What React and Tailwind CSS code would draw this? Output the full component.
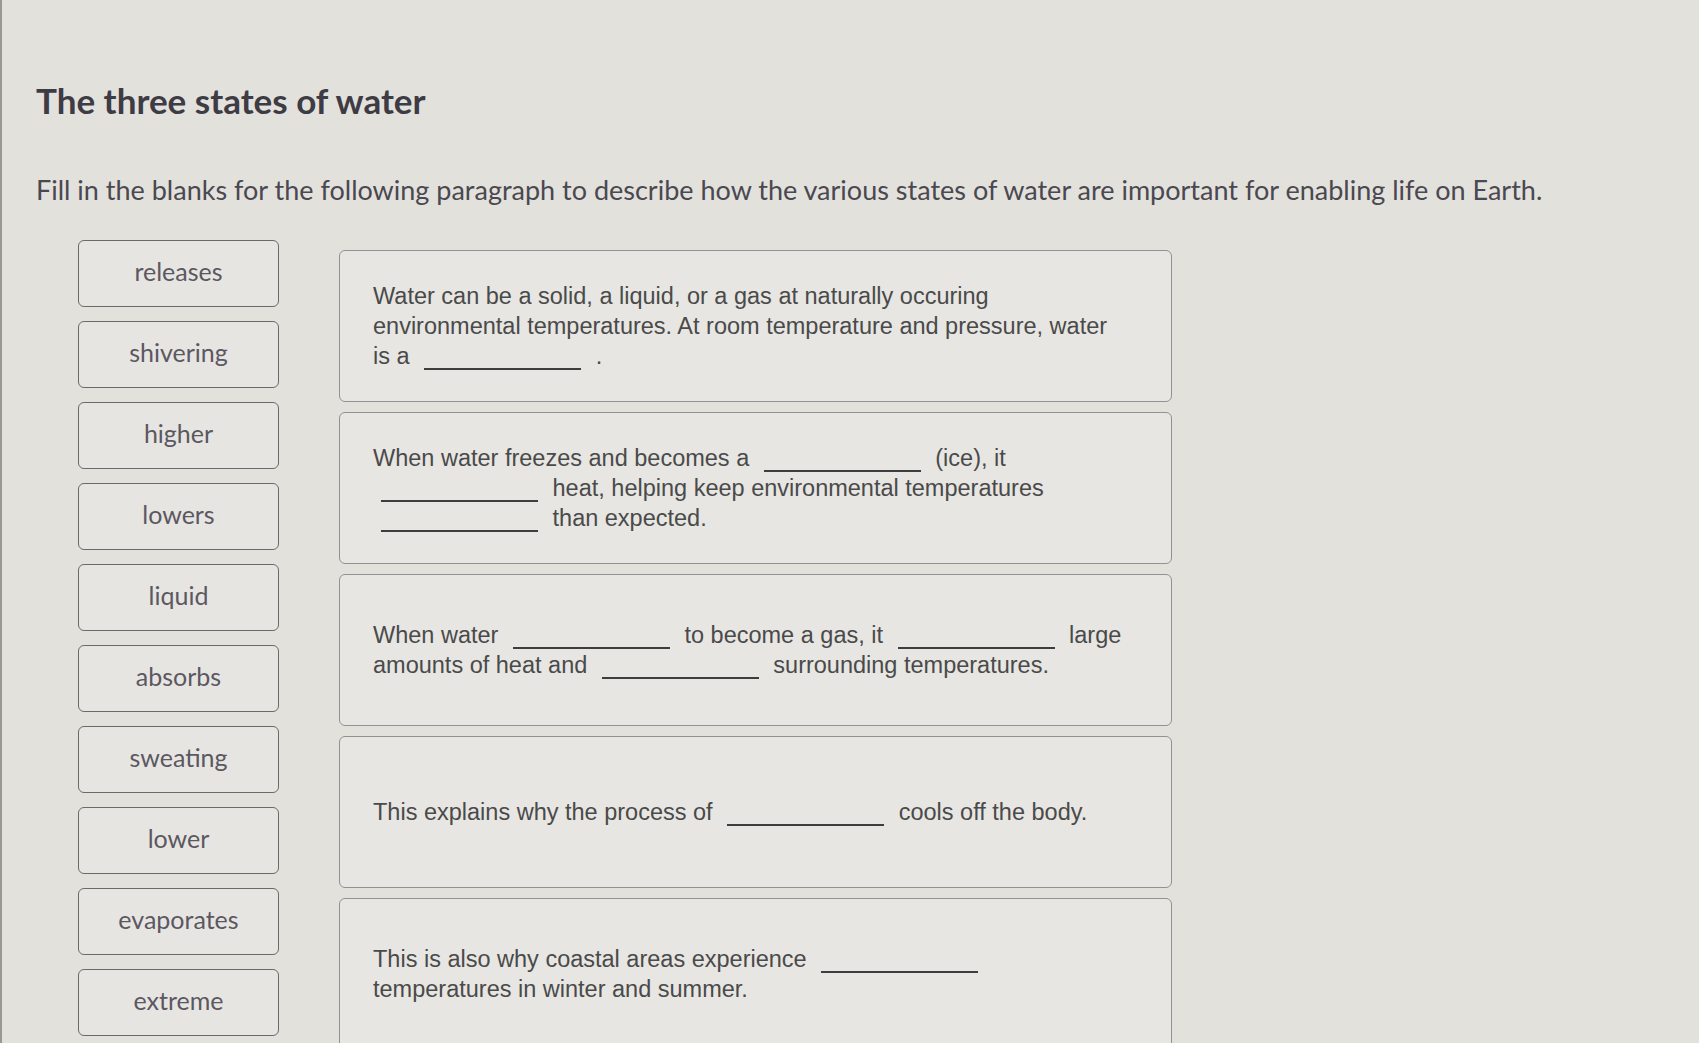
const words = [
  "releases",
  "shivering",
  "higher",
  "lowers",
  "liquid",
  "absorbs",
  "sweating",
  "lower",
  "evaporates",
  "extreme",
]

// each paragraph is a list of lines, "_" marks a blank
const paragraphs = [
  [
    ["Water can be a solid, a liquid, or a gas at naturally occuring"],
    ["environmental temperatures. At room temperature and pressure, water"],
    ["is a ", "_", " ."],
  ],
  [
    ["When water freezes and becomes a ", "_", " (ice), it"],
    ["_", " heat, helping keep environmental temperatures"],
    ["_", " than expected."],
  ],
  [
    ["When water ", "_", " to become a gas, it ", "_", " large"],
    ["amounts of heat and ", "_", " surrounding temperatures."],
  ],
  [["This explains why the process of ", "_", " cools off the body."]],
  [
    ["This is also why coastal areas experience ", "_"],
    ["temperatures in winter and summer."],
  ],
]

function Blank() {
  return (
    <span className="inline-block w-[157px] mx-2 border-b-2 border-[#3d3d3d] align-[-6px]" />
  )
}

function WordChip({ word }) {
  return (
    <div className="w-[201px] h-[67px] flex items-center justify-center pb-1 border-[1.5px] border-[#6a6a6a] rounded-md bg-[#e7e5e1] text-[25px] text-[#5b5862] font-['Lato',sans-serif]">
      {word}
    </div>
  )
}

function Paragraph({ lines }) {
  return (
    <div className="w-[833px] h-[152px] flex items-center pl-[33px] border-[1.5px] border-[#929292] rounded-md bg-[#e7e6e2]">
      <div className="text-[23.5px] leading-[30px] text-[#4a4a4a] font-['Liberation_Sans',Arial,sans-serif]">
        {lines.map((line, i) => (
          <div key={i} className="whitespace-pre">
            {line.map((seg, j) =>
              seg === "_" ? <Blank key={j} /> : <span key={j}>{seg}</span>
            )}
          </div>
        ))}
      </div>
    </div>
  )
}

export default function App() {
  return (
    <div className="h-[1043px] overflow-hidden bg-[#e3e1dc] border-l-2 border-[#9a9893] font-['Lato',sans-serif]">
      <div className="pl-[34px] pt-[80px]">
        {/* Header */}
        <h1 className="text-[35px] leading-[40px] font-bold text-[#3d3b44]">
          The three states of water
        </h1>
        <p className="mt-[54px] text-[27px] leading-[32px] text-[#4a4850]">
          Fill in the blanks for the following paragraph to describe how the various states of water are important for enabling life on Earth.
        </p>

        {/* Word bank + paragraphs */}
        <div className="flex gap-[60px] mt-[34px] ml-[42px]">
          <div className="flex flex-col gap-[14px]">
            {words.map((w) => (
              <WordChip key={w} word={w} />
            ))}
          </div>
          <div className="flex flex-col gap-[10px] mt-[10px]">
            {paragraphs.map((p, i) => (
              <Paragraph key={i} lines={p} />
            ))}
          </div>
        </div>
      </div>
    </div>
  )
}
